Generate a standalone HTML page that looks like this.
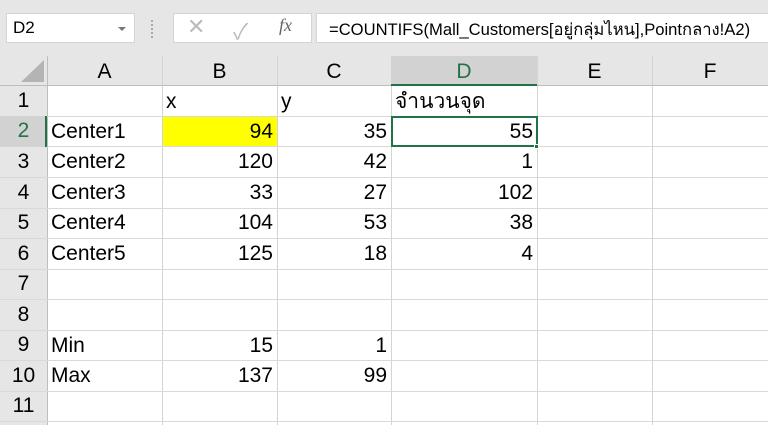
<!DOCTYPE html><html><head><style>
*{margin:0;padding:0;box-sizing:border-box}
body{width:768px;height:425px;overflow:hidden;background:#e6e6e6;font-family:"Liberation Sans","Noto Sans CJK SC",sans-serif;position:relative}
.a{position:absolute}
.box{background:#fff;border:1px solid #d4d4d4}
.cell{position:absolute;font-size:21px;line-height:30px;padding:0 4px;white-space:nowrap;color:#000}
.r{text-align:right}
.hd{position:absolute;font-size:21px;text-align:center;line-height:29px;color:#000}
</style></head><body>
<div class="a box" style="left:6px;top:13px;width:129px;height:30px"></div>
<div class="a" style="left:13px;top:18px;font-size:17px">D2</div>
<div class="a" style="left:118px;top:27px;border-left:4px solid transparent;border-right:4px solid transparent;border-top:4px solid #777"></div>
<div class="a" style="left:151px;top:20px;width:3px;height:18px;border-left:2px dotted #aaa"></div>
<div class="a box" style="left:173px;top:13px;width:139px;height:30px"></div>
<div class="a" style="left:187px;top:14px;font-size:22px;color:#bbb">✕</div>
<div class="a" style="left:233px;top:14px;font-size:22px;color:#bbb">✓</div>
<div class="a" style="left:279px;top:15px;font-size:18px;font-style:italic;font-family:'Liberation Serif',serif;color:#666">fx</div>
<div class="a box" style="left:316px;top:13px;width:460px;height:30px"></div>
<div class="a" style="left:329px;top:17px;font-size:16.6px;white-space:nowrap">=COUNTIFS(Mall_Customers[อยู่กลุ่มไหน],Pointกลาง!A2)</div>
<div class="a" style="left:47px;top:86px;width:721px;height:339px;background:#fff"></div>
<svg class="a" style="left:0;top:0" width="768" height="425">
<polygon points="44,60 44,82 21,82" fill="#b4b4b4"/>
<g stroke="#d4d4d4" stroke-width="1">
<line x1="47.5" y1="56" x2="47.5" y2="425" stroke="#bdbdbd"/>
<line x1="162.5" y1="56" x2="162.5" y2="425"/>
<line x1="277.5" y1="56" x2="277.5" y2="425"/>
<line x1="391.5" y1="56" x2="391.5" y2="425"/>
<line x1="537.5" y1="56" x2="537.5" y2="425"/>
<line x1="652.5" y1="56" x2="652.5" y2="425"/>
<line x1="0" y1="85.5" x2="768" y2="85.5" stroke="#bdbdbd"/>
</g>
<g stroke="#d9d9d9">
<line x1="0" y1="116.5" x2="768" y2="116.5"/><line x1="0" y1="146.5" x2="768" y2="146.5"/>
<line x1="0" y1="177.5" x2="768" y2="177.5"/><line x1="0" y1="208.5" x2="768" y2="208.5"/>
<line x1="0" y1="238.5" x2="768" y2="238.5"/><line x1="0" y1="269.5" x2="768" y2="269.5"/>
<line x1="0" y1="299.5" x2="768" y2="299.5"/><line x1="0" y1="330.5" x2="768" y2="330.5"/>
<line x1="0" y1="360.5" x2="768" y2="360.5"/><line x1="0" y1="391.5" x2="768" y2="391.5"/>
<line x1="0" y1="421.5" x2="768" y2="421.5"/>
</g>
</svg>
<div class="a" style="left:391px;top:56px;width:146px;height:30px;background:#d2d2d2;border-bottom:2px solid #217346"></div>
<div class="a" style="left:0;top:116px;width:47px;height:31px;background:#d2d2d2;border-right:2px solid #217346"></div>
<div class="hd" style="left:47px;top:57px;width:115px">A</div>
<div class="hd" style="left:162px;top:57px;width:115px">B</div>
<div class="hd" style="left:277px;top:57px;width:114px">C</div>
<div class="hd" style="left:391px;top:57px;width:146px;color:#217346">D</div>
<div class="hd" style="left:537px;top:57px;width:115px">E</div>
<div class="hd" style="left:652px;top:57px;width:116px">F</div>
<div class="a" style="left:163px;top:117px;width:114px;height:29px;background:#ffff00"></div>
<div class="a" style="left:391px;top:116px;width:147px;height:31px;border:2px solid #217346"></div>
<div class="a" style="left:534px;top:144px;width:5px;height:5px;background:#217346;border:1px solid #fff"></div>
<div class="hd" style="left:0;top:86px;width:47px">1</div>
<div class="hd" style="left:0;top:116px;width:47px;color:#217346">2</div>
<div class="hd" style="left:0;top:147px;width:47px">3</div>
<div class="hd" style="left:0;top:178px;width:47px">4</div>
<div class="hd" style="left:0;top:208px;width:47px">5</div>
<div class="hd" style="left:0;top:239px;width:47px">6</div>
<div class="hd" style="left:0;top:269px;width:47px">7</div>
<div class="hd" style="left:0;top:300px;width:47px">8</div>
<div class="hd" style="left:0;top:330px;width:47px">9</div>
<div class="hd" style="left:0;top:361px;width:47px">10</div>
<div class="hd" style="left:0;top:391px;width:47px">11</div>
<div class="cell" style="left:162px;top:87px">x</div>
<div class="cell" style="left:277px;top:87px">y</div>
<div class="cell" style="left:391px;top:87px">จำนวนจุด</div>
<div class="cell" style="left:47px;top:117px">Center1</div>
<div class="cell" style="left:47px;top:147px">Center2</div>
<div class="cell" style="left:47px;top:178px">Center3</div>
<div class="cell" style="left:47px;top:208px">Center4</div>
<div class="cell" style="left:47px;top:239px">Center5</div>
<div class="cell" style="left:47px;top:331px">Min</div>
<div class="cell" style="left:47px;top:361px">Max</div>
<div class="cell r" style="left:162px;width:115px;top:117px">94</div>
<div class="cell r" style="left:162px;width:115px;top:147px">120</div>
<div class="cell r" style="left:162px;width:115px;top:178px">33</div>
<div class="cell r" style="left:162px;width:115px;top:208px">104</div>
<div class="cell r" style="left:162px;width:115px;top:239px">125</div>
<div class="cell r" style="left:162px;width:115px;top:331px">15</div>
<div class="cell r" style="left:162px;width:115px;top:361px">137</div>
<div class="cell r" style="left:277px;width:114px;top:117px">35</div>
<div class="cell r" style="left:277px;width:114px;top:147px">42</div>
<div class="cell r" style="left:277px;width:114px;top:178px">27</div>
<div class="cell r" style="left:277px;width:114px;top:208px">53</div>
<div class="cell r" style="left:277px;width:114px;top:239px">18</div>
<div class="cell r" style="left:277px;width:114px;top:331px">1</div>
<div class="cell r" style="left:277px;width:114px;top:361px">99</div>
<div class="cell r" style="left:391px;width:146px;top:117px">55</div>
<div class="cell r" style="left:391px;width:146px;top:147px">1</div>
<div class="cell r" style="left:391px;width:146px;top:178px">102</div>
<div class="cell r" style="left:391px;width:146px;top:208px">38</div>
<div class="cell r" style="left:391px;width:146px;top:239px">4</div>
</body></html>
